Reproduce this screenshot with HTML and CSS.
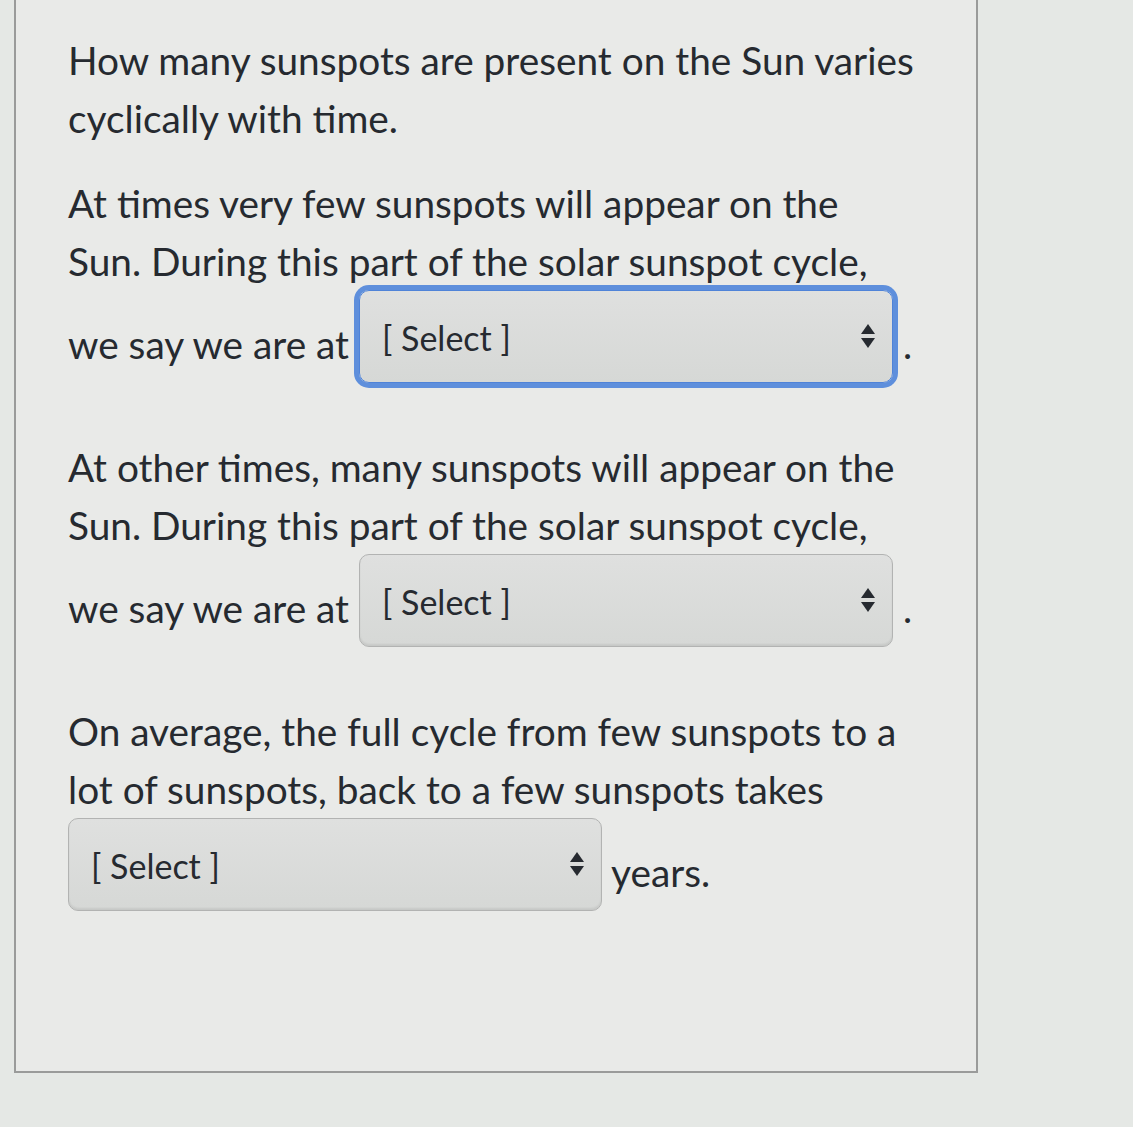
FILE: index.html
```html
<!DOCTYPE html>
<html lang="en">
<head>
<meta charset="utf-8">
<title>Sunspot cycle question</title>
<link rel="stylesheet" href="styles.css">
</head>
<body>
<div class="card">
  <p class="para">How many sunspots are present on the Sun varies cyclically with time.</p>
  <p class="para">At times very few sunspots will appear on the Sun. During this part of the solar sunspot cycle, we say we are at <span class="select focused"><span class="select-text">[ Select ]</span><svg class="arrows" width="16" height="28" viewBox="0 0 16 28"><path d="M8 2 L15 12 L1 12 Z" fill="#262a30"/><path d="M1 16 L15 16 L8 26 Z" fill="#262a30"/></svg></span> .</p>
  <p class="para">At other times, many sunspots will appear on the Sun. During this part of the solar sunspot cycle, we say we are at <span class="select"><span class="select-text">[ Select ]</span><svg class="arrows" width="16" height="28" viewBox="0 0 16 28"><path d="M8 2 L15 12 L1 12 Z" fill="#262a30"/><path d="M1 16 L15 16 L8 26 Z" fill="#262a30"/></svg></span> .</p>
  <p class="para">On average, the full cycle from few sunspots to a lot of sunspots, back to a few sunspots takes <span class="select"><span class="select-text">[ Select ]</span><svg class="arrows" width="16" height="28" viewBox="0 0 16 28"><path d="M8 2 L15 12 L1 12 Z" fill="#262a30"/><path d="M1 16 L15 16 L8 26 Z" fill="#262a30"/></svg></span> years.</p>
</div>
</body>
</html>
```
FILE: styles.css
```css
html, body {
  margin: 0;
  padding: 0;
}
body {
  background: #e5e8e5;
  font-family: Lato, "Open Sans", sans-serif;
  color: #262a30;
  height: 1127px;
  overflow: hidden;
}
.card {
  margin-left: 14px;
  width: 964px;
  height: 1073px;
  box-sizing: border-box;
  background: #e9eae8;
  border: 2px solid #9a9b9a;
  border-top: none;
  padding: 31px 58px 0 52px;
}
.para {
  margin: 0 0 27px 0;
  font-size: 38.8px;
  line-height: 58px;
}
.select {
  display: inline-flex;
  align-items: center;
  justify-content: space-between;
  box-sizing: border-box;
  width: 534px;
  height: 93px;
  padding: 4px 16px 0 22px;
  margin: 0 0 28px 0;
  vertical-align: 8px;
  font-size: 34px;
  line-height: 1.2;
  background: linear-gradient(#dfe0df, #d6d8d6);
  border: 1px solid #b2b3b2;
  border-radius: 10px;
  box-shadow: inset 0 -2px 2px rgba(0,0,0,0.07);
}
.select.focused {
  border-color: #4f83d8;
  box-shadow: 0 0 0 5px #5e8fdc;
}
.select-text {
  color: #262a30;
}
.arrows {
  display: block;
  margin-top: -6px;
}
```
